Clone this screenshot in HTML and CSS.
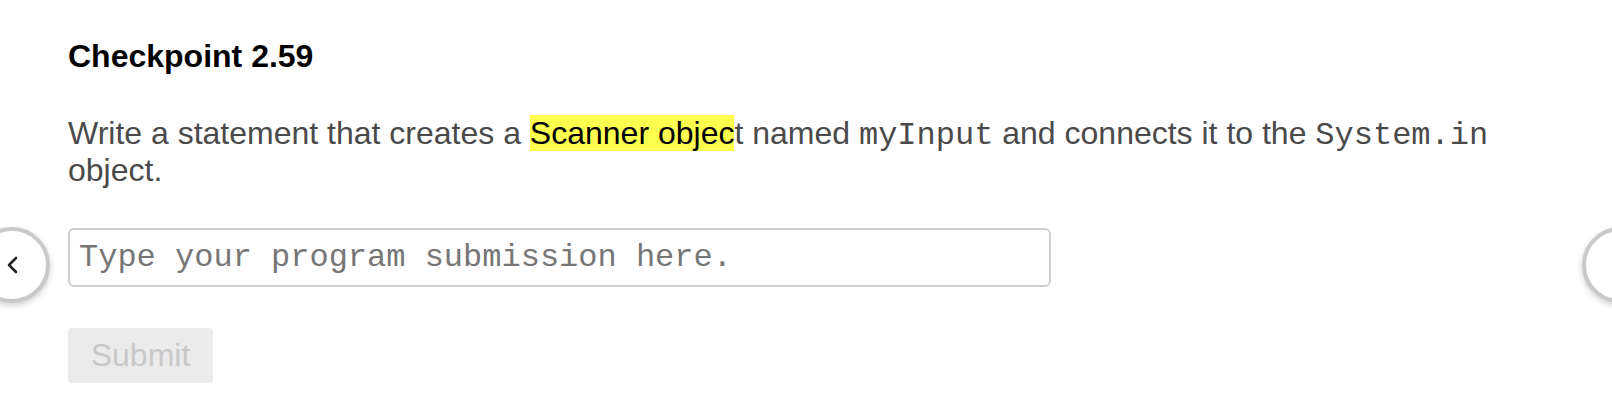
FILE: index.html
```html
<!DOCTYPE html>
<html>
<head>
<meta charset="utf-8">
<link rel="stylesheet" href="styles.css">
</head>
<body>
<div class="stage">
  <button class="nav nav-prev" aria-label="Previous">
    <svg class="chev" width="14" height="20" viewBox="0 0 14 20"><polyline points="10,3 3,10 10,17" fill="none" stroke="#222" stroke-width="2.6" stroke-linecap="round" stroke-linejoin="round"/></svg>
  </button>
  <button class="nav nav-next" aria-label="Next"></button>
  <div class="content">
    <h2 class="title">Checkpoint 2.59</h2>
    <p class="prompt">Write a statement that creates a <span class="hl">Scanner objec</span>t named <code class="code">myInput</code> and connects it to the <code class="code">System.in</code> object.</p>
    <input class="answer" type="text" placeholder="Type your program submission here.">
    <div class="actions">
      <button class="submit" disabled>Submit</button>
    </div>
  </div>
</div>
</body>
</html>
```

FILE: styles.css
```css
html, body {
  margin: 0;
  padding: 0;
  background: #ffffff;
}

body {
  font-family: "Liberation Sans", Arial, Helvetica, sans-serif;
  overflow: hidden;
}

.stage {
  position: relative;
  width: 1612px;
  height: 414px;
  overflow: hidden;
}

.content {
  display: flex;
  flex-direction: column;
  align-items: flex-start;
  padding: 36px 68px 0 68px;
}

.title {
  margin: 0;
  font-size: 32px;
  line-height: 40px;
  font-weight: bold;
  color: #000000;
}

.prompt {
  margin: 40px 0 0 0;
  font-size: 32px;
  line-height: 35px;
  color: #4a4a4a;
}

.hl {
  background: #ffff4f;
  color: #000000;
}

.code {
  font-family: "Liberation Mono", "Courier New", monospace;
  font-size: 32px;
}

.answer {
  box-sizing: border-box;
  margin-top: 40px;
  width: 983px;
  height: 59px;
  border: 2px solid #cfcfcf;
  border-radius: 6px;
  padding: 0 9px;
  font-family: "Liberation Mono", "Courier New", monospace;
  font-size: 32px;
  color: #333;
  background: #fff;
  outline: none;
}

.answer::placeholder {
  color: #767676;
}

.actions {
  margin-top: 41px;
  display: flex;
}

.submit {
  width: 145px;
  height: 55px;
  border: none;
  border-radius: 4px;
  background: #ebebeb;
  color: #c8c8c8;
  font-family: "Liberation Sans", Arial, Helvetica, sans-serif;
  font-size: 32px;
  padding: 0;
}

.nav {
  position: absolute;
  top: 227px;
  width: 76px;
  height: 76px;
  box-sizing: border-box;
  border-radius: 50%;
  border: 4px solid #c9c9c9;
  background: #ffffff;
  box-shadow: 0 3px 6px rgba(0, 0, 0, 0.18);
  padding: 0;
  display: flex;
  align-items: center;
  justify-content: center;
}

.nav-prev {
  left: -26px;
}

.nav-prev .chev {
  margin-left: 2px;
}

.nav-next {
  left: 1582px;
}
```
